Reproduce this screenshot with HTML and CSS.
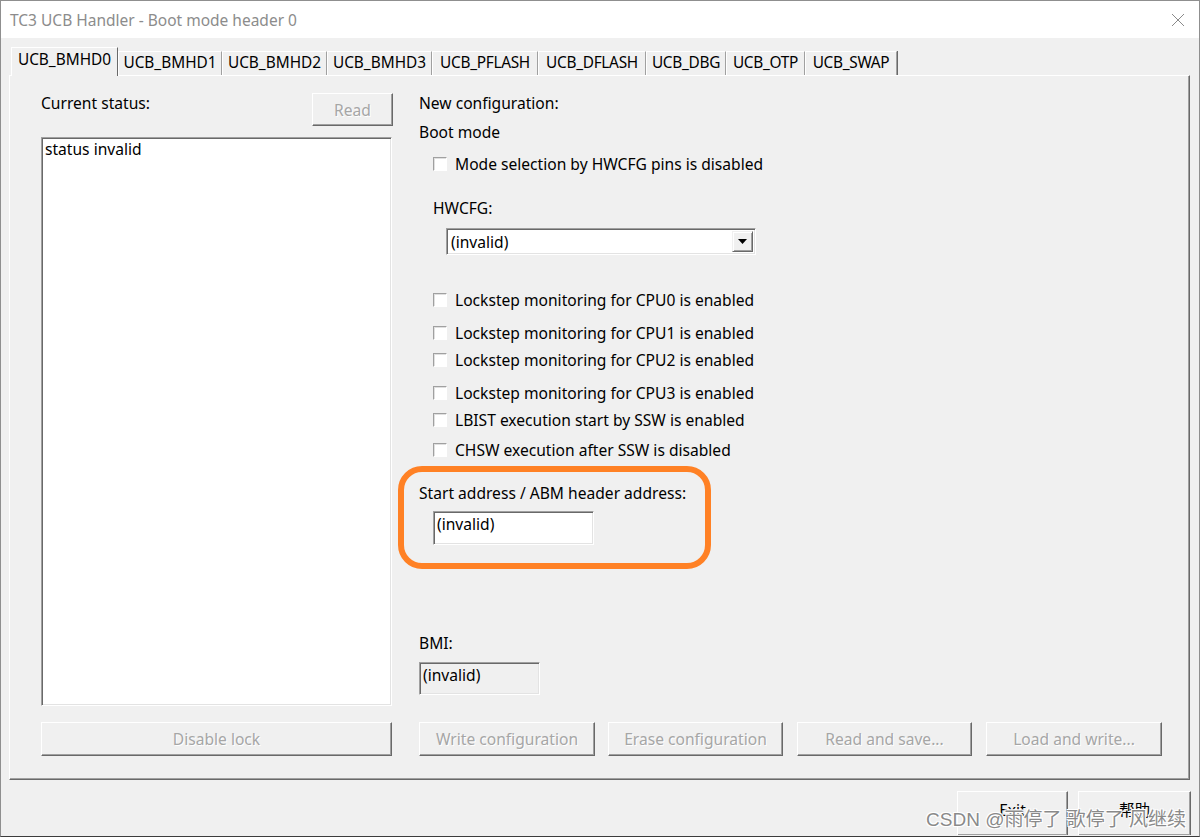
FILE: index.html
```html
<!DOCTYPE html>
<html>
<head>
<meta charset="utf-8">
<link rel="stylesheet" href="styles.css">
</head>
<body>
<div class="window">
  <div class="titlebar">
    <span class="title">TC3 UCB Handler - Boot mode header 0</span>
    <svg class="close" width="14" height="14" viewBox="0 0 14 14"><path d="M1 1 L13 13 M13 1 L1 13" stroke="#8a8a8a" stroke-width="1" fill="none"/></svg>
  </div>
  <div class="client">
    <div class="tabs">
      <div class="tab active" style="width:107px">UCB_BMHD0</div>
      <div class="tab" style="width:104px">UCB_BMHD1</div>
      <div class="tab" style="width:105px">UCB_BMHD2</div>
      <div class="tab" style="width:105px">UCB_BMHD3</div>
      <div class="tab narrow" style="width:106px">UCB_PFLASH</div>
      <div class="tab narrow" style="width:108px">UCB_DFLASH</div>
      <div class="tab narrow" style="width:80px">UCB_DBG</div>
      <div class="tab narrow" style="width:79px">UCB_OTP</div>
      <div class="tab narrow" style="width:92px">UCB_SWAP</div>
    </div>
    <div class="panel">
      <div class="panel-main">
        <div class="left">
          <div class="left-head">
            <span class="label">Current status:</span>
            <div class="btn disabled read">Read</div>
          </div>
          <div class="listbox">status invalid</div>
        </div>
        <div class="right">
          <div class="label">New configuration:</div>
          <div class="label boot">Boot mode</div>
          <div class="check c1"><span class="box"></span><span>Mode selection by HWCFG pins is disabled</span></div>
          <div class="label hwcfg">HWCFG:</div>
          <div class="combo"><span class="combo-text">(invalid)</span><span class="combo-btn"><svg width="9" height="5" viewBox="0 0 9 5"><path d="M0 0 H9 L4.5 5 Z" fill="#000"/></svg></span></div>
          <div class="check c2"><span class="box"></span><span>Lockstep monitoring for CPU0 is enabled</span></div>
          <div class="check c3"><span class="box"></span><span>Lockstep monitoring for CPU1 is enabled</span></div>
          <div class="check c4"><span class="box"></span><span>Lockstep monitoring for CPU2 is enabled</span></div>
          <div class="check c5"><span class="box"></span><span>Lockstep monitoring for CPU3 is enabled</span></div>
          <div class="check c6"><span class="box"></span><span>LBIST execution start by SSW is enabled</span></div>
          <div class="check c7"><span class="box"></span><span>CHSW execution after SSW is disabled</span></div>
          <div class="highlight">
            <div class="label">Start address / ABM header address:</div>
            <div class="edit">(invalid)</div>
          </div>
          <div class="bmi">
            <div class="label">BMI:</div>
            <div class="edit readonly">(invalid)</div>
          </div>
        </div>
      </div>
      <div class="button-row">
        <div class="btn disabled w-lock">Disable lock</div>
        <div class="btn disabled w-write">Write configuration</div>
        <div class="btn disabled w-erase">Erase configuration</div>
        <div class="btn disabled w-save">Read and save...</div>
        <div class="btn disabled w-load">Load and write...</div>
      </div>
    </div>
    <div class="footer">
      <div class="btn exit">Exit</div>
      <div class="btn help">帮助</div>
      <div class="watermark">CSDN @雨停了 歌停了 风继续</div>
    </div>
  </div>
</div>
</body>
</html>
```

FILE: styles.css
```css
html, body {
  margin: 0;
  padding: 0;
}
body {
  font-family: "Noto Sans", "Noto Sans CJK SC", sans-serif;
  font-size: 15.6px;
  color: #000;
  background: #f0f0f0;
}
.window {
  width: 1200px;
  height: 837px;
  box-sizing: border-box;
  border: 1px solid #8f8f8f;
  border-bottom-color: #3c3c3c;
  background: #f0f0f0;
  display: flex;
  flex-direction: column;
  overflow: hidden;
}
.titlebar {
  height: 37px;
  flex: none;
  background: #fff;
  display: flex;
  align-items: center;
  padding: 0 14px 0 9px;
}
.title {
  flex: 1;
  color: #8c8c8c;
  font-size: 15.5px;
}
.close {
  display: block;
}
.client {
  flex: 1;
  display: flex;
  flex-direction: column;
  padding: 9px 9px 0 8px;
  position: relative;
}
.tabs {
  height: 28px;
  display: flex;
  align-items: flex-end;
  padding-left: 2px;
  flex: none;
}
.tab {
  box-sizing: border-box;
  height: 24px;
  border-top: 1px solid #fff;
  border-left: 1px solid #fff;
  border-right: 1px solid #a0a0a0;
  box-shadow: 1px 0 0 #696969;
  text-align: center;
  line-height: 22px;
  font-size: 15.4px;
  white-space: nowrap;
  background: #f0f0f0;
}
.tab.narrow {
  letter-spacing: -0.3px;
}
.tab.active {
  height: 29px;
  margin-bottom: -1px;
  position: relative;
  z-index: 2;
  line-height: 24px;
  border-right-color: #696969;
  box-shadow: none;
}
.panel {
  flex: none;
  height: 705px;
  box-sizing: border-box;
  border-top: 1px solid #fff;
  border-left: 1px solid #fff;
  border-right: 1px solid #696969;
  border-bottom: 1px solid #696969;
  box-shadow: inset -1px -1px 0 #a0a0a0;
  padding: 17px 0 23px 31px;
  display: flex;
  flex-direction: column;
}
.panel-main {
  flex: 1;
  display: flex;
}
.left {
  width: 351px;
  display: flex;
  flex-direction: column;
}
.left-head {
  height: 33px;
  display: flex;
  justify-content: space-between;
  align-items: flex-start;
}
.label {
  line-height: 20px;
  white-space: nowrap;
}
.btn {
  box-sizing: border-box;
  border-top: 1px solid #fff;
  border-left: 1px solid #fff;
  border-right: 1px solid #696969;
  border-bottom: 1px solid #696969;
  box-shadow: inset -1px -1px 0 #a0a0a0;
  background: #f0f0f0;
  display: flex;
  align-items: center;
  justify-content: center;
  white-space: nowrap;
}
.btn.disabled {
  color: #a6a6a6;
  text-shadow: 1px 1px 0 #fff;
}
.read {
  width: 81px;
  height: 33px;
  margin-right: -1px;
}
.listbox {
  margin-top: 11px;
  flex: 1;
  background: #fff;
  border-top: 1px solid #a0a0a0;
  border-left: 1px solid #a0a0a0;
  border-right: 1px solid #fff;
  border-bottom: 1px solid #fff;
  box-shadow: inset 1px 1px 0 #696969, inset -1px -1px 0 #e3e3e3;
  padding: 1px 3px;
  line-height: 20px;
}
.right {
  margin-left: 27px;
  flex: 1;
  display: flex;
  flex-direction: column;
}
.boot { margin-top: 9px; }
.check {
  display: flex;
  align-items: center;
  height: 20px;
  margin-left: 14px;
  white-space: nowrap;
}
.box {
  width: 14px;
  height: 14px;
  box-sizing: border-box;
  background: #fff;
  border-top: 1px solid #a0a0a0;
  border-left: 1px solid #a0a0a0;
  border-right: 1px solid #fff;
  border-bottom: 1px solid #fff;
  box-shadow: inset 1px 1px 0 #e0e0e0;
  margin-right: 8px;
  flex: none;
}
.c1 { margin-top: 12px; }
.hwcfg { margin-top: 24px; margin-left: 14px; }
.combo {
  margin-top: 10px;
  margin-left: 27px;
  width: 310px;
  height: 27px;
  box-sizing: border-box;
  background: #fff;
  border-top: 1px solid #a0a0a0;
  border-left: 1px solid #a0a0a0;
  border-right: 1px solid #fff;
  border-bottom: 1px solid #fff;
  box-shadow: inset 1px 1px 0 #696969, inset -1px -1px 0 #e3e3e3;
  display: flex;
  align-items: stretch;
  padding: 2px;
}
.combo-text {
  flex: 1;
  line-height: 22px;
  padding-left: 2px;
}
.combo-btn {
  width: 21px;
  box-sizing: border-box;
  background: #f0f0f0;
  border-top: 1px solid #f0f0f0;
  border-left: 1px solid #f0f0f0;
  border-right: 1px solid #696969;
  border-bottom: 1px solid #696969;
  box-shadow: inset 1px 1px 0 #fff, inset -1px -1px 0 #a0a0a0;
  display: flex;
  align-items: center;
  justify-content: center;
}
.c2 { margin-top: 35px; }
.c3 { margin-top: 13px; }
.c4 { margin-top: 7px; }
.c5 { margin-top: 13px; }
.c6 { margin-top: 7px; }
.c7 { margin-top: 10px; }
.highlight {
  margin-top: 6px;
  margin-left: -21px;
  width: 313px;
  height: 103px;
  box-sizing: border-box;
  border: 6px solid #ff8125;
  border-radius: 24px;
  padding: 11px 0 0 15px;
}
.edit {
  margin-top: 8px;
  margin-left: 14px;
  width: 161px;
  height: 34px;
  box-sizing: border-box;
  background: #fff;
  border-top: 1px solid #a0a0a0;
  border-left: 1px solid #a0a0a0;
  border-right: 1px solid #fff;
  border-bottom: 1px solid #fff;
  box-shadow: inset 1px 1px 0 #696969, inset -1px -1px 0 #e3e3e3;
  padding: 2px 3px;
  line-height: 20px;
}
.bmi {
  margin-top: auto;
  margin-bottom: 11px;
}
.bmi .edit {
  margin-left: 0;
  margin-top: 9px;
  width: 121px;
  height: 33px;
  background: #f0f0f0;
}
.button-row {
  margin-top: 16px;
  display: flex;
  height: 34px;
  flex: none;
}
.w-lock { width: 351px; }
.w-write { width: 176px; margin-left: 27px; }
.w-erase { width: 175px; margin-left: 13px; }
.w-save { width: 175px; margin-left: 14px; }
.w-load { width: 176px; margin-left: 14px; }
.footer {
  margin-top: 11px;
  display: flex;
  justify-content: flex-end;
  height: 44px;
}
.exit { width: 111px; margin-right: 10px; padding-bottom: 8px; border-bottom: none; }
.help { width: 113px; margin-right: -1px; padding-bottom: 8px; border-bottom: none; }
.watermark {
  position: absolute;
  right: 13px;
  bottom: 5px;
  font-family: "Liberation Sans", "Noto Sans CJK SC", sans-serif;
  font-size: 19px;
  color: #8a8a8a;
  text-shadow: -1px -1px 0 #fff, 1px -1px 0 #fff, -1px 1px 0 #fff, 1px 1px 0 #fff;
  white-space: nowrap;
}
```
